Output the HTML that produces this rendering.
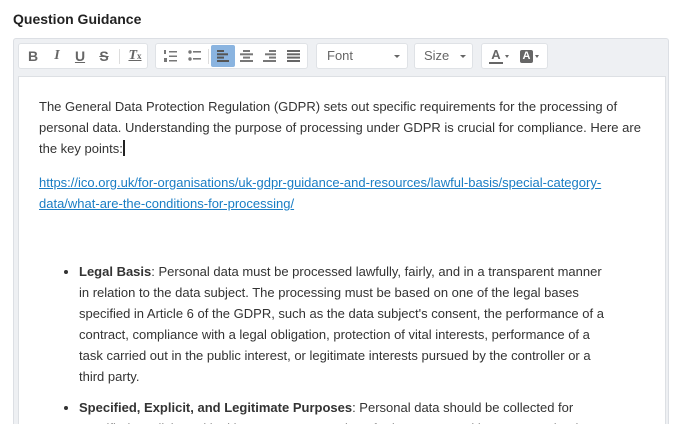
<!DOCTYPE html>
<html><head><style>
body{margin:0;width:675px;height:435px;overflow:hidden;background:#fff;font-family:"Liberation Sans",Arial,sans-serif;}
h3{position:absolute;left:13px;top:11px;margin:0;font-size:14px;font-weight:bold;color:#222;}
.box{position:absolute;left:13px;top:38px;width:654px;height:385px;background:#eef0f3;border:1px solid #dcdfe4;border-bottom:none;border-radius:3px 3px 0 0;overflow:hidden;}
.grp{position:absolute;top:4px;height:26px;background:#fff;border:1px solid #dfe2e6;border-radius:3px;box-sizing:border-box;color:#666;font-size:13px;}
.b{position:absolute;top:0;height:24px;line-height:24px;text-align:center;font-size:14px;color:#666;}
.content{position:absolute;left:4px;top:37px;width:646px;height:360px;background:#fff;border:1px solid #dde0e4;color:#333;font-size:13px;line-height:21px;overflow:hidden;}
p{margin:0;}
a{color:#1a7dc4;}
ul{margin:0;padding-left:40px;}
li{margin-bottom:10px;padding-right:42px;}
</style></head><body>
<h3>Question Guidance</h3>
<div class="box">
 <div class="grp" style="left:4px;width:130px">
  <span class="b" style="left:5px;width:18px;font-weight:bold">B</span>
  <span class="b" style="left:29px;width:18px;font-style:italic;font-family:'Liberation Serif',serif;font-weight:bold">I</span>
  <span class="b" style="left:52px;width:18px;text-decoration:underline;font-weight:bold">U</span>
  <span class="b" style="left:76px;width:18px;text-decoration:line-through;font-weight:bold">S</span>
  <span style="position:absolute;left:100px;top:5px;width:1px;height:15px;background:#ddd"></span>
  <span class="b" style="left:106px;width:20px;font-style:italic;font-family:'Liberation Serif',serif;font-weight:bold;text-decoration:underline">T<span style="font-size:9px;font-style:normal;text-decoration:none">x</span></span>
 </div>
 <div class="grp" style="left:141px;width:153px">
  <svg style="position:absolute;left:8px;top:6px" width="14" height="13" fill="#777"><rect x="5" y="1" width="8" height="1.5"/><rect x="5" y="5.5" width="8" height="1.5"/><rect x="5" y="10" width="8" height="1.5"/><rect x="0" y="0" width="2" height="4"/><rect x="0" y="8" width="3" height="4"/></svg>
  <svg style="position:absolute;left:32px;top:6px" width="14" height="13" fill="#777"><circle cx="2" cy="2" r="1.7"/><circle cx="2" cy="9" r="1.7"/><rect x="5" y="1" width="8" height="1.6"/><rect x="5" y="8" width="8" height="1.6"/></svg>
  <span style="position:absolute;left:52px;top:5px;width:1px;height:15px;background:#ddd"></span>
  <span style="position:absolute;left:55px;top:1px;width:24px;height:22px;background:#8ab4e0;border-radius:2px"></span>
  <svg style="position:absolute;left:61px;top:6px" width="13" height="12" fill="#555"><rect x="0" y="0" width="7" height="2"/><rect x="0" y="3.3" width="11" height="2"/><rect x="0" y="6.6" width="7" height="2"/><rect x="0" y="10" width="12" height="2"/></svg>
  <svg style="position:absolute;left:84px;top:6px" width="13" height="12" fill="#777"><rect x="3" y="0" width="7" height="2"/><rect x="0" y="3.3" width="13" height="2"/><rect x="3" y="6.6" width="7" height="2"/><rect x="0" y="10" width="13" height="2"/></svg>
  <svg style="position:absolute;left:107px;top:6px" width="13" height="12" fill="#777"><rect x="6" y="0" width="7" height="2"/><rect x="2" y="3.3" width="11" height="2"/><rect x="6" y="6.6" width="7" height="2"/><rect x="0" y="10" width="13" height="2"/></svg>
  <svg style="position:absolute;left:131px;top:6px" width="13" height="12" fill="#666"><rect x="0" y="0" width="13" height="2"/><rect x="0" y="3.3" width="13" height="2"/><rect x="0" y="6.6" width="13" height="2"/><rect x="0" y="10" width="13" height="2"/></svg>
 </div>
 <div class="grp" style="left:302px;width:92px"><span class="b" style="left:10px;font-size:13px">Font</span><span style="position:absolute;left:77px;top:11px;border:3px solid transparent;border-top:3px solid #666"></span></div>
 <div class="grp" style="left:400px;width:59px"><span class="b" style="left:9px;font-size:13px">Size</span><span style="position:absolute;left:45px;top:11px;border:3px solid transparent;border-top:3px solid #666"></span></div>
 <div class="grp" style="left:467px;width:67px">
  <span class="b" style="left:7px;width:14px;font-weight:bold;font-size:13px;line-height:22px">A</span><span style="position:absolute;left:7px;top:18px;width:14px;height:2px;background:#666"></span>
  <span style="position:absolute;left:23px;top:11px;border:2.5px solid transparent;border-top:3px solid #666"></span>
  <span style="position:absolute;left:38px;top:6px;width:13px;height:13px;background:#666;border-radius:2px;color:#fff;font-size:11px;font-weight:bold;text-align:center;line-height:13px">A</span>
  <span style="position:absolute;left:53px;top:11px;border:2.5px solid transparent;border-top:3px solid #666"></span>
 </div>
 <div class="content">
  <div style="position:absolute;left:20px;top:19px;width:610px">
   <p>The General Data Protection Regulation (GDPR) sets out specific requirements for the processing of personal data. Understanding the purpose of processing under GDPR is crucial for compliance. Here are the key points:<span style="display:inline-block;width:2px;height:16px;background:#222;vertical-align:-3px"></span></p>
   <p style="margin-top:13px"><a href="#">https://ico.org.uk/for-organisations/uk-gdpr-guidance-and-resources/lawful-basis/special-category-data/what-are-the-conditions-for-processing/</a></p>
   <div style="height:47px"></div>
   <ul>
    <li><b>Legal Basis</b>: Personal data must be processed lawfully, fairly, and in a transparent manner in relation to the data subject. The processing must be based on one of the legal bases specified in Article 6 of the GDPR, such as the data subject's consent, the performance of a contract, compliance with a legal obligation, protection of vital interests, performance of a task carried out in the public interest, or legitimate interests pursued by the controller or a third party.</li>
    <li><b>Specified, Explicit, and Legitimate Purposes</b>: Personal data should be collected for specified, explicit, and legitimate purposes and not further processed in a manner that is incompatible with those purposes.</li>
   </ul>
  </div>
 </div>
</div>
</body></html>
